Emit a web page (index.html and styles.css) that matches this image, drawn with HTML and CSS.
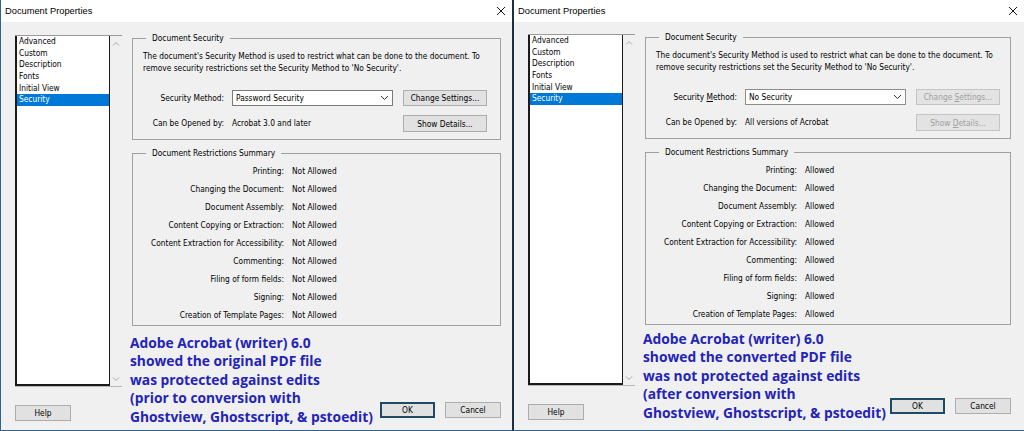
FILE: index.html
```html
<!DOCTYPE html>
<html lang="en">
<head>
    <meta charset="UTF-8">
    <title>Document Properties</title>
    <link rel="stylesheet" href="styles.css">
</head>
<body>
    <div class="screen">
        <!-- before conversion -->
        <section class="dialog">
            <div class="titlebar">
                <span class="title">Document Properties</span>
                <svg class="close" width="10" height="10" viewBox="0 0 10 10"><path d="M1 1 L9 9 M9 1 L1 9" stroke="#1a1a1a" stroke-width="1" fill="none"/></svg>
            </div>
            <div class="dialog-body">
                <div class="side">
                    <div class="listbox">
                        <ul class="items">
                            <li>Advanced</li>
                            <li>Custom</li>
                            <li>Description</li>
                            <li>Fonts</li>
                            <li>Initial View</li>
                            <li class="selected">Security</li>
                        </ul>
                        <div class="scroll">
                            <svg width="8" height="5" viewBox="0 0 8 5"><path d="M1 4.5 L4 1.5 L7 4.5" stroke="#a8a8a8" fill="none"/></svg>
                            <svg width="8" height="5" viewBox="0 0 8 5"><path d="M1 0.5 L4 3.5 L7 0.5" stroke="#a8a8a8" fill="none"/></svg>
                        </div>
                    </div>
                    <button class="btn">Help</button>
                </div>
                <div class="main">
                    <fieldset class="group security">
                        <legend>Document Security</legend>
                        <p class="intro">The document's Security Method is used to restrict what can be done to the document. To<br>remove security restrictions set the Security Method to 'No Security'.</p>
                        <div class="form">
                            <span class="label">Security Method:</span>
                            <div class="select">
                                <span>Password Security</span>
                                <svg width="9" height="6" viewBox="0 0 9 6"><path d="M1 1 L4.5 4.5 L8 1" stroke="#333" fill="none"/></svg>
                            </div>
                            <button class="btn wide">Change Settings...</button>
                            <span class="label">Can be Opened by:</span>
                            <span class="value">Acrobat 3.0 and later</span>
                            <button class="btn wide tall">Show Details...</button>
                        </div>
                    </fieldset>
                    <fieldset class="group restrictions">
                        <legend>Document Restrictions Summary</legend>
                        <dl class="summary">
                            <dt>Printing:</dt><dd>Not Allowed</dd>
                            <dt>Changing the Document:</dt><dd>Not Allowed</dd>
                            <dt>Document Assembly:</dt><dd>Not Allowed</dd>
                            <dt>Content Copying or Extraction:</dt><dd>Not Allowed</dd>
                            <dt>Content Extraction for Accessibility:</dt><dd>Not Allowed</dd>
                            <dt>Commenting:</dt><dd>Not Allowed</dd>
                            <dt>Filing of form fields:</dt><dd>Not Allowed</dd>
                            <dt>Signing:</dt><dd>Not Allowed</dd>
                            <dt>Creation of Template Pages:</dt><dd>Not Allowed</dd>
                        </dl>
                    </fieldset>
                    <div class="footer">
                        <p class="note">Adobe Acrobat (writer) 6.0<br>showed the original PDF file<br>was protected against edits<br>(prior to conversion with<br>Ghostview, Ghostscript, &amp; pstoedit)</p>
                        <div class="actions">
                            <button class="btn default">OK</button>
                            <button class="btn">Cancel</button>
                        </div>
                    </div>
                </div>
            </div>
        </section>

        <!-- after conversion -->
        <section class="dialog after">
            <div class="titlebar">
                <span class="title">Document Properties</span>
                <svg class="close" width="10" height="10" viewBox="0 0 10 10"><path d="M1 1 L9 9 M9 1 L1 9" stroke="#1a1a1a" stroke-width="1" fill="none"/></svg>
            </div>
            <div class="dialog-body">
                <div class="side">
                    <div class="listbox">
                        <ul class="items">
                            <li>Advanced</li>
                            <li>Custom</li>
                            <li>Description</li>
                            <li>Fonts</li>
                            <li>Initial View</li>
                            <li class="selected">Security</li>
                        </ul>
                        <div class="scroll">
                            <svg width="8" height="5" viewBox="0 0 8 5"><path d="M1 4.5 L4 1.5 L7 4.5" stroke="#a8a8a8" fill="none"/></svg>
                            <svg width="8" height="5" viewBox="0 0 8 5"><path d="M1 0.5 L4 3.5 L7 0.5" stroke="#a8a8a8" fill="none"/></svg>
                        </div>
                    </div>
                    <button class="btn">Help</button>
                </div>
                <div class="main">
                    <fieldset class="group security">
                        <legend>Document Security</legend>
                        <p class="intro">The document's Security Method is used to restrict what can be done to the document. To<br>remove security restrictions set the Security Method to 'No Security'.</p>
                        <div class="form">
                            <span class="label">Security <u>M</u>ethod:</span>
                            <div class="select">
                                <span>No Security</span>
                                <svg width="9" height="6" viewBox="0 0 9 6"><path d="M1 1 L4.5 4.5 L8 1" stroke="#333" fill="none"/></svg>
                            </div>
                            <button class="btn wide" disabled>Change <u>S</u>ettings...</button>
                            <span class="label">Can be Opened by:</span>
                            <span class="value">All versions of Acrobat</span>
                            <button class="btn wide tall" disabled>Show <u>D</u>etails...</button>
                        </div>
                    </fieldset>
                    <fieldset class="group restrictions">
                        <legend>Document Restrictions Summary</legend>
                        <dl class="summary">
                            <dt>Printing:</dt><dd>Allowed</dd>
                            <dt>Changing the Document:</dt><dd>Allowed</dd>
                            <dt>Document Assembly:</dt><dd>Allowed</dd>
                            <dt>Content Copying or Extraction:</dt><dd>Allowed</dd>
                            <dt>Content Extraction for Accessibility:</dt><dd>Allowed</dd>
                            <dt>Commenting:</dt><dd>Allowed</dd>
                            <dt>Filing of form fields:</dt><dd>Allowed</dd>
                            <dt>Signing:</dt><dd>Allowed</dd>
                            <dt>Creation of Template Pages:</dt><dd>Allowed</dd>
                        </dl>
                    </fieldset>
                    <div class="footer">
                        <p class="note">Adobe Acrobat (writer) 6.0<br>showed the converted PDF file<br>was not protected against edits<br>(after conversion with<br>Ghostview, Ghostscript, &amp; pstoedit)</p>
                        <div class="actions">
                            <button class="btn default">OK</button>
                            <button class="btn">Cancel</button>
                        </div>
                    </div>
                </div>
            </div>
        </section>
    </div>
</body>
</html>
```

FILE: styles.css
```css
body {
    margin: 0;
    padding: 0;
    background-color: #f0f0f0;
    font-family: "DejaVu Sans Condensed", "DejaVu Sans", sans-serif;
    font-size: 8.3px;
    line-height: 11px;
    color: #000;
}

.screen {
    display: flex;
    width: 1024px;
    height: 431px;
    overflow: hidden;
}

.dialog {
    flex: none;
    width: 513px;
    height: 431px;
    box-sizing: border-box;
    border-left: 1px solid #2d6490;
    border-right: 1px solid #1a2e44;
    border-bottom: 1px solid #2d6490;
    background-color: #f0f0f0;
    display: flex;
    flex-direction: column;
}

.dialog.after {
    width: 512px;
    border-left-color: #1a2e44;
}

.titlebar {
    height: 22px;
    flex: none;
    background-color: #fff;
    display: flex;
    align-items: center;
    justify-content: space-between;
    padding: 0 6px 0 4px;
}

.title {
    font-family: "Liberation Sans", Arial, sans-serif;
    font-size: 9.3px;
}

.close {
    display: block;
}

.dialog-body {
    flex: 1;
    display: grid;
    grid-template-columns: 107px 1fr;
    column-gap: 10px;
    padding: 11px 11px 0 14px;
    overflow: hidden;
}

.dialog.after .dialog-body {
    padding-top: 10px;
    padding-right: 13px;
}

/* left column */
.side {
    display: flex;
    flex-direction: column;
}

.listbox {
    margin-top: 2px;
    height: 350px;
    display: flex;
    border-top: 1px solid #9a9a9a;
    border-bottom: 1px solid #b8b8b8;
}

.items {
    list-style: none;
    margin: 0;
    padding: 0;
    width: 92px;
    background-color: #fff;
    border: 1px solid #1a1a1a;
    border-left-width: 2px;
    border-bottom-width: 2px;
    border-top: none;
}

.items li {
    height: 11.66px;
    line-height: 11.66px;
    padding: 0 2px;
}

.items li.selected {
    background-color: #0078d7;
    color: #fff;
}

.scroll {
    flex: 1;
    display: flex;
    flex-direction: column;
    justify-content: space-between;
    align-items: center;
    padding: 5px 0 4px;
}

.btn {
    font-family: inherit;
    font-size: 8.3px;
    color: #000;
    height: 16px;
    width: 56px;
    padding: 0;
    margin: 0;
    background-color: #e1e1e1;
    border: 1px solid #adadad;
    box-sizing: border-box;
}

.side .btn {
    margin-top: 18px;
}

.btn.wide {
    width: 84px;
}

.btn.tall {
    height: 17px;
}

.btn.default {
    width: 55px;
    border-color: #1e4a66;
    box-shadow: inset 0 0 0 1px #1e4a66;
}

.btn:disabled {
    color: #a0a0a0;
    background-color: #e3e3e3;
    border-color: #c4c4c4;
}

/* right column */
.main {
    display: flex;
    flex-direction: column;
}

.group {
    margin: 0;
    padding: 0 10px;
    border: 1px solid #a0a0a0;
    min-width: 0;
}

.group legend {
    padding: 0 6px;
    margin-left: 3px;
    line-height: 11px;
}

.security {
    padding-top: 7px;
    padding-bottom: 7px;
}

.intro {
    margin: 0;
    line-height: 11.5px;
}

.form {
    display: grid;
    grid-template-columns: 81px 161px 84px;
    grid-template-rows: 16px 17px;
    column-gap: 8px;
    row-gap: 9px;
    align-items: center;
    margin-top: 16px;
}

.form .btn {
    margin-left: 2px;
}

.label {
    text-align: right;
}

.select {
    height: 16px;
    box-sizing: border-box;
    border: 1px solid #7a7a7a;
    background-color: #fff;
    display: flex;
    align-items: center;
    justify-content: space-between;
    padding: 0 3px 0 3px;
}

.dialog.after .select {
    border-color: #8c8c8c;
}

.restrictions {
    margin-top: 8px;
    padding: 4px 10px 1px;
}

.summary {
    display: grid;
    grid-template-columns: 141px auto;
    grid-auto-rows: 17.9px;
    column-gap: 8px;
    align-items: center;
    margin: 0;
}

.summary dt {
    text-align: right;
}

.summary dd {
    margin: 0;
}

.footer {
    display: flex;
    align-items: flex-end;
}

.note {
    margin: 8px 0 0 -2px;
    font-family: "Open Sans", sans-serif;
    font-weight: 700;
    font-size: 13.8px;
    line-height: 18.4px;
    color: #2323b8;
    white-space: nowrap;
}

.dialog.after .note {
    margin-top: 5px;
}

.actions {
    margin-left: auto;
    margin-bottom: 8px;
    display: flex;
    gap: 10px;
}
```
